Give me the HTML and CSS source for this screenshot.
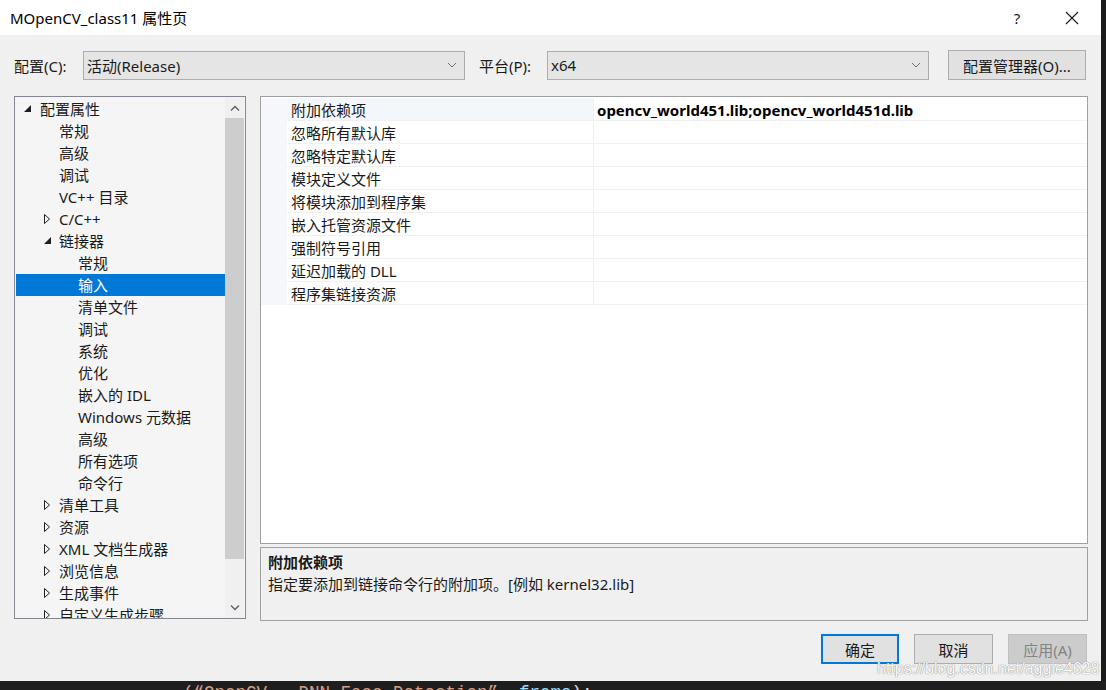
FILE: index.html
```html
<!DOCTYPE html>
<html lang="zh-CN">
<head>
  <meta charset="UTF-8">
  <title>MOpenCV_class11 属性页</title>
  <link rel="stylesheet" href="styles.css">
</head>
<body>

  <div class="screen">
    <div class="dialog">

      <div class="titlebar">
        <span class="title">MOpenCV_class11 属性页</span>
        <span class="tb-help">?</span>
        <span class="tb-close">
          <svg width="14" height="14" viewBox="0 0 14 14"><path d="M1 1L13 13M13 1L1 13" stroke="#1a1a1a" stroke-width="1.1" fill="none"/></svg>
        </span>
      </div>

      <div class="toolbar">
        <span class="lbl">配置(C):</span>
        <div class="combo">
          <span>活动(Release)</span>
          <svg width="10" height="6" viewBox="0 0 10 6"><path d="M1 1L5 5L9 1" stroke="#707070" stroke-width="1" fill="none"/></svg>
        </div>
        <span class="lbl lbl-platform">平台(P):</span>
        <div class="combo">
          <span>x64</span>
          <svg width="10" height="6" viewBox="0 0 10 6"><path d="M1 1L5 5L9 1" stroke="#707070" stroke-width="1" fill="none"/></svg>
        </div>
        <button class="btn btn-manager">配置管理器(O)...</button>
      </div>

      <div class="main">
        <div class="tree">
          <div class="tree-list">
            <div class="node l0"><span class="tw"><svg width="8" height="8" viewBox="0 0 8 8"><polygon points="7,0 7,7 0,7" fill="#1e1e1e"/></svg></span>配置属性</div>
            <div class="node l1"><span class="tw"></span>常规</div>
            <div class="node l1"><span class="tw"></span>高级</div>
            <div class="node l1"><span class="tw"></span>调试</div>
            <div class="node l1"><span class="tw"></span>VC++ 目录</div>
            <div class="node l1"><span class="tw"><svg width="7" height="10" viewBox="0 0 7 10"><polygon points="0.5,0.5 5.5,5 0.5,9.5" fill="none" stroke="#1e1e1e" stroke-width="1"/></svg></span>C/C++</div>
            <div class="node l1"><span class="tw"><svg width="8" height="8" viewBox="0 0 8 8"><polygon points="7,0 7,7 0,7" fill="#1e1e1e"/></svg></span>链接器</div>
            <div class="node l2"><span class="tw"></span>常规</div>
            <div class="node l2 selected"><span class="tw"></span>输入</div>
            <div class="node l2"><span class="tw"></span>清单文件</div>
            <div class="node l2"><span class="tw"></span>调试</div>
            <div class="node l2"><span class="tw"></span>系统</div>
            <div class="node l2"><span class="tw"></span>优化</div>
            <div class="node l2"><span class="tw"></span>嵌入的 IDL</div>
            <div class="node l2"><span class="tw"></span>Windows 元数据</div>
            <div class="node l2"><span class="tw"></span>高级</div>
            <div class="node l2"><span class="tw"></span>所有选项</div>
            <div class="node l2"><span class="tw"></span>命令行</div>
            <div class="node l1"><span class="tw"><svg width="7" height="10" viewBox="0 0 7 10"><polygon points="0.5,0.5 5.5,5 0.5,9.5" fill="none" stroke="#1e1e1e" stroke-width="1"/></svg></span>清单工具</div>
            <div class="node l1"><span class="tw"><svg width="7" height="10" viewBox="0 0 7 10"><polygon points="0.5,0.5 5.5,5 0.5,9.5" fill="none" stroke="#1e1e1e" stroke-width="1"/></svg></span>资源</div>
            <div class="node l1"><span class="tw"><svg width="7" height="10" viewBox="0 0 7 10"><polygon points="0.5,0.5 5.5,5 0.5,9.5" fill="none" stroke="#1e1e1e" stroke-width="1"/></svg></span>XML 文档生成器</div>
            <div class="node l1"><span class="tw"><svg width="7" height="10" viewBox="0 0 7 10"><polygon points="0.5,0.5 5.5,5 0.5,9.5" fill="none" stroke="#1e1e1e" stroke-width="1"/></svg></span>浏览信息</div>
            <div class="node l1"><span class="tw"><svg width="7" height="10" viewBox="0 0 7 10"><polygon points="0.5,0.5 5.5,5 0.5,9.5" fill="none" stroke="#1e1e1e" stroke-width="1"/></svg></span>生成事件</div>
            <div class="node l1"><span class="tw"><svg width="7" height="10" viewBox="0 0 7 10"><polygon points="0.5,0.5 5.5,5 0.5,9.5" fill="none" stroke="#1e1e1e" stroke-width="1"/></svg></span>自定义生成步骤</div>
          </div>
          <div class="scrollbar">
            <div class="sb-arrow">
              <svg width="10" height="6" viewBox="0 0 10 6"><path d="M1 5.5L5 1.5L9 5.5" stroke="#606060" stroke-width="1.4" fill="none"/></svg>
            </div>
            <div class="sb-track"><div class="sb-thumb"></div></div>
            <div class="sb-arrow">
              <svg width="10" height="6" viewBox="0 0 10 6"><path d="M1 0.5L5 4.5L9 0.5" stroke="#606060" stroke-width="1.4" fill="none"/></svg>
            </div>
          </div>
        </div>

        <div class="right">
          <div class="grid">
            <div class="row active"><div class="margin"></div><div class="name">附加依赖项</div><div class="value">opencv_world451.lib;opencv_world451d.lib</div></div>
            <div class="row"><div class="margin"></div><div class="name">忽略所有默认库</div><div class="value"></div></div>
            <div class="row"><div class="margin"></div><div class="name">忽略特定默认库</div><div class="value"></div></div>
            <div class="row"><div class="margin"></div><div class="name">模块定义文件</div><div class="value"></div></div>
            <div class="row"><div class="margin"></div><div class="name">将模块添加到程序集</div><div class="value"></div></div>
            <div class="row"><div class="margin"></div><div class="name">嵌入托管资源文件</div><div class="value"></div></div>
            <div class="row"><div class="margin"></div><div class="name">强制符号引用</div><div class="value"></div></div>
            <div class="row"><div class="margin"></div><div class="name">延迟加载的 DLL</div><div class="value"></div></div>
            <div class="row"><div class="margin"></div><div class="name">程序集链接资源</div><div class="value"></div></div>
          </div>
          <div class="desc">
            <div class="desc-title">附加依赖项</div>
            <div class="desc-text">指定要添加到链接命令行的附加项。[例如 kernel32.lib]</div>
          </div>
        </div>
      </div>

      <div class="footer">
        <button class="btn btn-ok">确定</button>
        <button class="btn">取消</button>
        <button class="btn btn-disabled">应用(A)</button>
      </div>

      <div class="watermark">https://blog.csdn.net/aggie4628</div>
    </div>

    <div class="side-strip"></div>
  </div>

  <div class="code-strip">
    <span class="code-line"><span class="str">(“OpenCV - DNN Face Detection”</span>, <span class="var">frame</span>);</span>
  </div>

</body>
</html>
```

FILE: styles.css
```css
body {
  margin: 0;
  background: #1e1e1e;
  font-family: "Noto Sans", "Noto Sans CJK SC", sans-serif;
  font-size: 15px;
  color: #1a1a1a;
  overflow: hidden;
}
.screen {
  display: flex;
  height: 681px;
}
.dialog {
  position: relative;
  width: 1101px;
  height: 681px;
  background: #f0f0f0;
  display: flex;
  flex-direction: column;
}
.side-strip {
  flex: 1;
  background: #1b1b1b;
}

/* title bar */
.titlebar {
  height: 35px;
  background: #fff;
  display: flex;
  align-items: center;
  padding-left: 10px;
}
.title {
  font-size: 15px;
  color: #000;
  flex: 1;
}
.tb-help {
  font-size: 15px;
  width: 20px;
  text-align: center;
  margin-right: 38px;
}
.tb-close {
  width: 14px;
  height: 14px;
  margin-right: 22px;
  display: flex;
}

/* config row */
.toolbar {
  display: flex;
  align-items: center;
  padding: 15px 0 0 14px;
  height: 30px;
}
.lbl {
  width: 69px;
  color: #1a1a1a;
}
.lbl-platform {
  margin-left: 14px;
  width: 68px;
}
.combo {
  width: 382px;
  height: 29px;
  border: 1px solid #adadad;
  background: #e5e5e5;
  display: flex;
  align-items: center;
  justify-content: space-between;
  padding: 0 7px 0 3px;
  box-sizing: border-box;
}
.btn {
  font-family: inherit;
  font-size: 15px;
  color: #1a1a1a;
  background: #e1e1e1;
  border: 1px solid #adadad;
  height: 30px;
  width: 79px;
  padding: 0;
  margin: 0;
}
.btn-manager {
  width: 138px;
  margin-left: 19px;
}

/* main area */
.main {
  display: flex;
  margin-top: 16px;
  padding-left: 14px;
  gap: 14px;
}
.tree {
  width: 232px;
  height: 523px;
  box-sizing: border-box;
  border: 1px solid #828790;
  background: #f5f5f5;
  display: flex;
  padding: 0 1px;
}
.tree-list {
  flex: 1;
  overflow: hidden;
  padding-top: 1px;
}
.node {
  height: 22px;
  line-height: 22px;
  display: flex;
  align-items: center;
  white-space: nowrap;
}
.node.l0 { padding-left: 8px; }
.node.l1 { padding-left: 27px; }
.node.l2 { padding-left: 46px; }
.tw {
  width: 16px;
  height: 22px;
  flex-shrink: 0;
  display: flex;
  align-items: center;
}
.node.l1 .tw svg { margin-left: 1px; }
.node.selected {
  background: #0078d7;
  color: #fff;
}
.scrollbar {
  width: 19px;
  background: #f0f0f0;
  display: flex;
  flex-direction: column;
}
.sb-arrow {
  height: 21px;
  display: flex;
  align-items: center;
  justify-content: center;
}
.sb-track {
  flex: 1;
}
.sb-thumb {
  height: 441px;
  background: #cdcdcd;
}

/* property grid */
.right {
  display: flex;
  flex-direction: column;
  gap: 3px;
  width: 828px;
}
.grid {
  height: 448px;
  box-sizing: border-box;
  border: 1px solid #a0a0a0;
  background: #fff;
  padding-top: 1px;
}
.row {
  display: flex;
  height: 23px;
}
.margin {
  width: 26px;
  background: #f5f7fb;
}
.name {
  width: 302px;
  padding: 2px 0 0 4px;
  line-height: 20px;
  border-bottom: 1px solid #f0f0f0;
  border-right: 1px solid #f0f0f0;
}
.value {
  flex: 1;
  padding: 2px 0 0 3px;
  line-height: 20px;
  border-bottom: 1px solid #f0f0f0;
  font-weight: bold;
  color: #000;
}
.row.active .name {
  background: #f3f6fb;
}

/* description */
.desc {
  height: 74px;
  box-sizing: border-box;
  border: 1px solid #a0a0a0;
  padding: 3px 7px;
}
.desc-title {
  font-weight: bold;
  line-height: 22px;
}
.desc-text {
  line-height: 22px;
}

/* buttons */
.footer {
  display: flex;
  justify-content: flex-end;
  gap: 15px;
  padding: 13px 14px 0 0;
}
.btn-ok {
  width: 78px;
  border: 2px solid #0078d7;
}
.btn-disabled {
  background: #cccccc;
  border-color: #bfbfbf;
  color: #838383;
}

.watermark {
  position: absolute;
  left: 877px;
  top: 659px;
  font-family: "Liberation Sans", sans-serif;
  font-size: 16px;
  line-height: 20px;
  color: #fafafa;
  text-shadow: 0 0 1px #8a8a8a, 0 0 1px #9a9a9a;
}

/* editor behind the dialog */
.code-strip {
  height: 9px;
  overflow: hidden;
  background: #1e1e1e;
  padding-left: 183px;
}
.code-line {
  display: block;
  font-family: "Liberation Mono", monospace;
  font-size: 17.5px;
  line-height: 20px;
  margin-top: 2px;
  color: #dcdcdc;
  white-space: nowrap;
}
.str { color: #d69d85; }
.var { color: #9cdcfe; }
```
